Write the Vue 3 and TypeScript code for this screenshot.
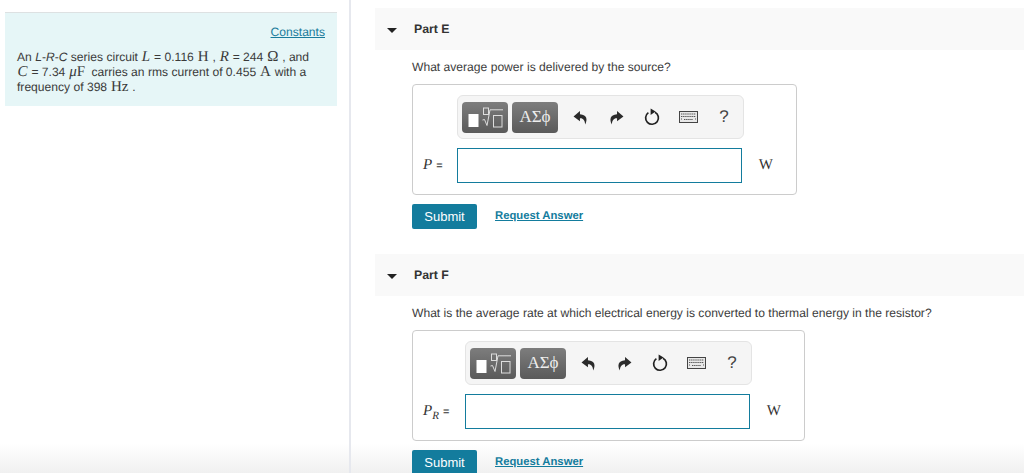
<script setup lang="ts">
interface Part {
  title: string
  question: string
  symbol: string
  sub?: string
}

const parts: Part[] = [
  { title: 'Part E', question: 'What average power is delivered by the source?', symbol: 'P' },
  {
    title: 'Part F',
    question: 'What is the average rate at which electrical energy is converted to thermal energy in the resistor?',
    symbol: 'P',
    sub: 'R',
  },
]
</script>

<template>
  <div class="page">
    <div class="fade"></div>
    <aside class="left">
      <div class="info">
        <div class="constants"><a href="#">Constants</a></div>
        <p class="text">
          An <i>L</i>-<i>R</i>-<i>C</i> series circuit <i class="m">L</i> = 0.116 <span class="m">H</span> ,
          <i class="m">R</i> = 244 <span class="m">Ω</span> , and<br />
          <i class="m">C</i> = 7.34 <span class="m mu"><i>μ</i>F</span> carries an rms current of 0.455
          <span class="m">A</span> with a<br />
          frequency of 398 <span class="m">Hz</span> .
        </p>
      </div>
    </aside>

    <main class="right">
      <section v-for="part in parts" :key="part.title" class="part">
        <header class="part-head">
          <span class="caret"></span>
          <span class="part-title">{{ part.title }}</span>
        </header>
        <div class="part-body">
          <p class="question">{{ part.question }}</p>
          <div class="answer-box">
            <div class="answer-grid">
              <div class="toolbar">
                <button class="tool-btn" type="button">
                  <svg width="46" height="31" viewBox="0 0 46 31">
                    <rect x="6.5" y="12" width="10" height="13" fill="#fff" />
                    <rect x="21.5" y="6" width="5" height="6.5" fill="none" stroke="#ddd" />
                    <path d="M20.5 18 L22.5 17.5 L25 23.5 L28 7.8 L41 7.8" fill="none" stroke="#ddd" />
                    <rect x="31.5" y="13.5" width="8.5" height="11.5" fill="none" stroke="#ddd" />
                  </svg>
                </button>
                <button class="tool-btn greek" type="button">ΑΣϕ</button>
                <span class="tool-icon">
                  <svg width="15" height="15" viewBox="0 0 14 14">
                    <path d="M6.5 1 L0.5 6 L6.5 10.5 V7.6 C9.6 7.4 11 9.5 11.4 13.5 C13.6 9.4 13.4 4.4 6.5 4 Z" fill="#2b2b2b" />
                  </svg>
                </span>
                <span class="tool-icon">
                  <svg width="15" height="15" viewBox="0 0 14 14">
                    <path d="M7.5 1 L13.5 6 L7.5 10.5 V7.6 C4.4 7.4 3 9.5 2.6 13.5 C0.4 9.4 0.6 4.4 7.5 4 Z" fill="#2b2b2b" />
                  </svg>
                </span>
                <span class="tool-icon">
                  <svg width="16" height="18" viewBox="0 0 16 18">
                    <path d="M4.4 4.6 A6.4 6.4 0 1 0 11 4.2" fill="none" stroke="#222" stroke-width="1.7" />
                    <path d="M6.6 0.5 L11.6 3.6 L6.6 7 Z" fill="#222" />
                  </svg>
                </span>
                <span class="tool-icon">
                  <svg width="19" height="12" viewBox="0 0 19 12">
                    <rect x="0.5" y="0.5" width="18" height="11" fill="#e8e8e8" stroke="#444" />
                    <path d="M2 3 H17 M2 5.5 H17 M2 8 H3 M5 8.5 H14 M16 8 H17" stroke="#555" stroke-width="1.2" stroke-dasharray="1.4 .7" />
                  </svg>
                </span>
                <span class="tool-icon help">?</span>
              </div>
              <label class="symbol" :class="{ 'has-sub': part.sub }">
                <i>{{ part.symbol }}</i><sub v-if="part.sub"><i>{{ part.sub }}</i></sub>
                <span class="eq">=</span>
              </label>
              <input class="field" type="text" />
              <span class="unit">W</span>
            </div>
          </div>
          <div class="actions">
            <button class="submit" type="button">Submit</button>
            <a class="request" href="#">Request Answer</a>
          </div>
        </div>
      </section>
    </main>
  </div>
</template>

<style>
html,
body {
  margin: 0;
  background: #fff;
  overflow: hidden;
}
</style>

<style scoped>
.page {
  display: flex;
  width: 1024px;
  height: 473px;
  overflow: hidden;
  position: relative;
  font-family: "Liberation Sans", Arial, sans-serif;
  color: #333;
  text-rendering: geometricPrecision;
}

.left {
  position: relative;
  box-sizing: border-box;
  flex: 0 0 351px;
  height: 473px;
  padding: 12px 12px 0 5px;
  border-right: 2px solid #e6e8ee;
}

.info {
  box-sizing: border-box;
  height: 94px;
  padding: 12px 12px 0 12px;
  background: #e6f6f7;
  border-top: 1px solid #dde1e2;
}

.constants {
  text-align: right;
  font-size: 12.1px;
  line-height: 14px;
}

.constants a {
  color: #1b7c9c;
}

.text {
  margin: 11px 0 0;
  font-size: 12.1px;
  line-height: 15px;
  color: #3a3a3a;
}

.m {
  margin: 0 0.5px;
  font-family: "Liberation Serif", serif;
  font-size: 15px;
  line-height: 1;
}

.mu {
  margin-right: 3px;
}

.right {
  position: relative;
  flex: 1;
  padding: 8px 0 0 24px;
  min-width: 0;
}

.part {
  height: 246px;
}

.part-head {
  display: flex;
  align-items: center;
  height: 42px;
  background: #f9f9f9;
}

.caret {
  width: 0;
  height: 0;
  margin: 2px 0 0 12px;
  border-left: 5px solid transparent;
  border-right: 5px solid transparent;
  border-top: 5px solid #222;
}

.part-title {
  margin-left: 17px;
  font-size: 12.3px;
  font-weight: 700;
  color: #333;
}

.part-body {
  padding-left: 37px;
}

.question {
  margin: 10px 0 0;
  font-size: 12.1px;
  line-height: 14px;
  color: #3c3c3c;
}

.answer-box {
  display: inline-block;
  box-sizing: border-box;
  height: 111px;
  margin-top: 10px;
  padding: 10px 54px 0 10px;
  border: 1px solid #ccc;
  border-radius: 4px;
  vertical-align: top;
}

.answer-grid {
  display: grid;
  grid-template-columns: auto 285px;
  row-gap: 9px;
  position: relative;
}

.toolbar {
  grid-column: 2;
  display: flex;
  align-items: center;
  box-sizing: border-box;
  width: 287px;
  height: 44px;
  padding: 0 4px;
  background: #f5f5f5;
  border: 1px solid #e4e4e4;
  border-radius: 6px;
}

.tool-btn {
  display: flex;
  align-items: center;
  justify-content: center;
  flex: none;
  width: 46px;
  height: 31px;
  margin: 0 4px 0 0;
  padding: 0;
  border: 0;
  border-radius: 4px;
  background: linear-gradient(#7d7d7d, #5a5a5a);
}

.greek {
  color: #eee;
  font-family: "Liberation Serif", serif;
  font-size: 17px;
}

.tool-icon {
  display: flex;
  align-items: center;
  justify-content: center;
  flex: none;
  width: 36px;
}

.help {
  font-size: 17px;
  color: #444;
}

.symbol {
  grid-column: 1;
  grid-row: 2;
  align-self: center;
  box-sizing: border-box;
  width: 34px;
  font-family: "Liberation Serif", serif;
  font-size: 15px;
  color: #333;
  white-space: nowrap;
}

.symbol.has-sub {
  width: 42px;
}

.symbol sub {
  font-size: 11px;
  line-height: 0;
}

.eq {
  margin-left: 4px;
  font-family: "Liberation Sans", sans-serif;
  font-size: 11px;
}

.field {
  grid-column: 2;
  grid-row: 2;
  box-sizing: border-box;
  width: 285px;
  height: 35px;
  border: 1px solid #137c9d;
  background: #fff;
  outline: none;
}

.unit {
  position: absolute;
  right: -31px;
  bottom: 9px;
  font-family: "Liberation Serif", serif;
  font-size: 15px;
  color: #333;
}

.actions {
  display: flex;
  align-items: center;
  margin-top: 9px;
}

.submit {
  width: 65px;
  height: 25px;
  padding: 0;
  border: 0;
  border-radius: 2px;
  background: #137c9d;
  color: #fff;
  font-family: "Liberation Sans", sans-serif;
  font-size: 13px;
}

.request {
  margin: -2px 0 0 18px;
  font-size: 11.3px;
  font-weight: 700;
  color: #137c9d;
}

.fade {
  position: absolute;
  left: 0;
  right: 0;
  bottom: 0;
  height: 30px;
  background: linear-gradient(rgba(235, 235, 235, 0), rgba(235, 235, 235, 0.75));
  pointer-events: none;
}
</style>
